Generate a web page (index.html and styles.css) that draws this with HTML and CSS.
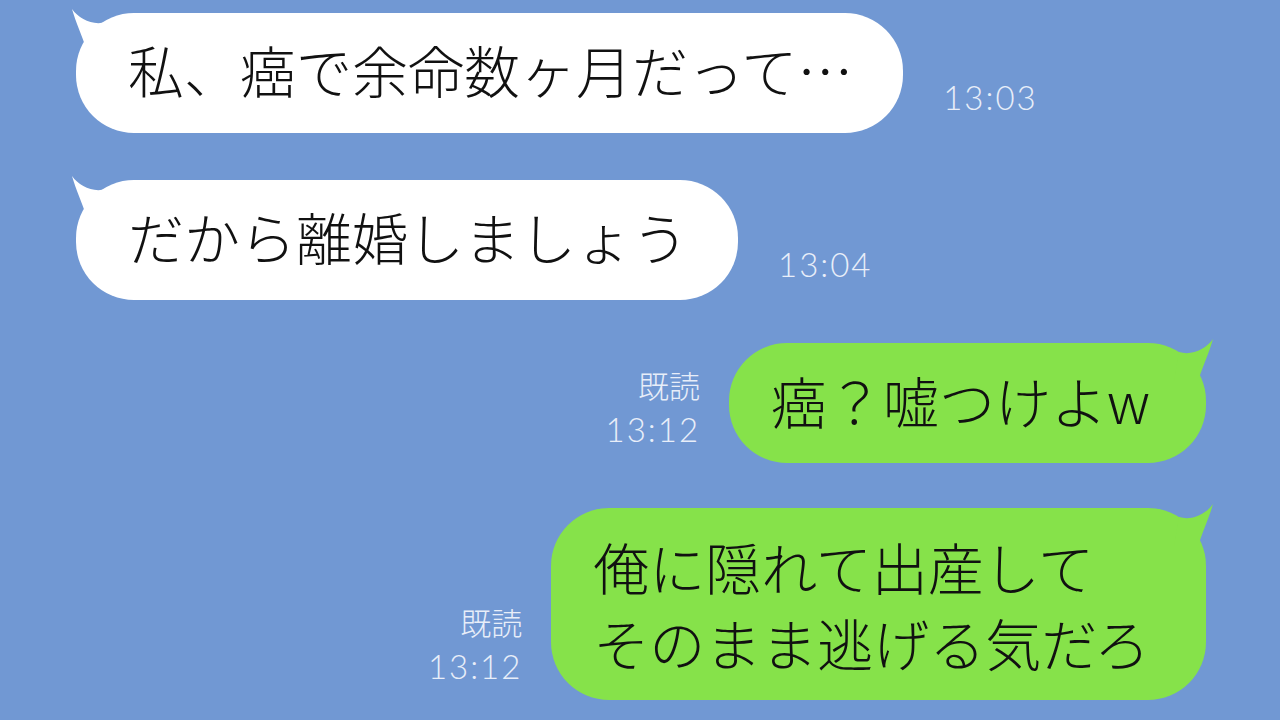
FILE: index.html
```html
<!DOCTYPE html>
<html lang="ja">
<head>
    <meta charset="UTF-8">
    <title>トーク</title>
    <link rel="stylesheet" href="styles.css">
</head>
<body>
    <div class="chat">
        <div class="row left r1">
            <div class="bubble white">
                <svg class="tail" viewBox="0 0 50 50"><path d="M3 2 C10 12 24 19 37 15 L42 44 L18 44 C12 26 7 16 3 2 Z"/></svg>
                私、癌で余命数ヶ月だって…
            </div>
            <div class="time">13:03</div>
        </div>
        <div class="row left r2">
            <div class="bubble white">
                <svg class="tail" viewBox="0 0 50 50"><path d="M3 2 C10 12 24 19 37 15 L42 44 L18 44 C12 26 7 16 3 2 Z"/></svg>
                だから離婚しましょう
            </div>
            <div class="time">13:04</div>
        </div>
        <div class="row right r3">
            <div class="meta">
                <span class="read">既読</span>
                <span>13:12</span>
            </div>
            <div class="bubble green">
                <svg class="tail" viewBox="0 0 50 50"><path d="M3 2 C10 12 24 19 37 15 L42 44 L18 44 C12 26 7 16 3 2 Z"/></svg>
                癌？嘘つけよw
            </div>
        </div>
        <div class="row right r4">
            <div class="meta">
                <span class="read">既読</span>
                <span>13:12</span>
            </div>
            <div class="bubble green multi">
                <svg class="tail" viewBox="0 0 50 50"><path d="M3 2 C10 12 24 19 37 15 L42 44 L18 44 C12 26 7 16 3 2 Z"/></svg>
                俺に隠れて出産して<br>そのまま逃げる気だろ
            </div>
        </div>
    </div>
</body>
</html>
```

FILE: styles.css
```css
*{
    padding: 0;
    margin: 0;
}
body{
    width: 1280px;
    height: 720px;
    overflow: hidden;
    background: #7198d3;
    font-family: "Noto Sans CJK JP", "Noto Sans", sans-serif;
}
.chat{
    display: flex;
    flex-direction: column;
    padding: 13px 74px 0 76px;
}
.row{
    display: flex;
    align-items: flex-end;
}
.row.right{
    justify-content: flex-end;
}
.r2{
    margin-top: 47px;
}
.r3{
    margin-top: 43px;
}
.r4{
    margin-top: 45px;
}
.bubble{
    position: relative;
    font-size: 56px;
    font-weight: 300;
    line-height: 76px;
    color: #111;
    white-space: nowrap;
    border-radius: 58px;
    padding: 18px 50px 26px 52px;
}
.bubble.white{
    background: #fff;
}
.bubble.green{
    background: #86e24a;
    padding: 19px 56px 25px 42px;
}
.bubble.multi{
    padding-top: 20px;
    padding-bottom: 20px;
}
.tail{
    position: absolute;
    top: -6px;
    width: 50px;
    height: 50px;
}
.white .tail{
    left: -7px;
    fill: #fff;
}
.green .tail{
    right: -10px;
    fill: #86e24a;
    transform: scaleX(-1);
}
.time,.meta{
    font-family: Lato, "Noto Sans CJK JP", sans-serif;
    font-size: 33px;
    font-weight: 300;
    color: #e8eef9;
    letter-spacing: 2px;
}
.time{
    margin: 0 0 16px 40px;
    line-height: 40px;
}
.meta{
    display: flex;
    flex-direction: column;
    align-items: flex-end;
    line-height: 43px;
    margin: 0 29px 12px 0;
}
.meta .read{
    font-size: 31px;
    letter-spacing: 0;
}
```
